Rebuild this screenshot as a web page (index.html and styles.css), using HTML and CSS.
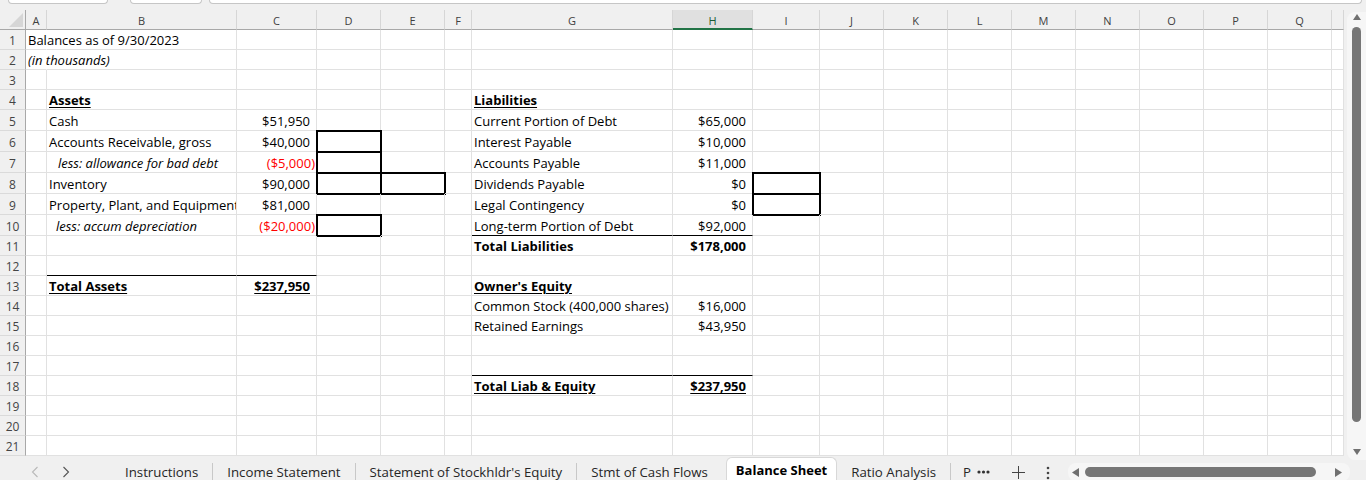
FILE: index.html
```html
<!DOCTYPE html>
<html lang="en">
<head>
    <meta charset="UTF-8">
    <meta name="viewport" content="width=device-width, initial-scale=1.0">
    <title>Balance Sheet</title>
    <link rel="stylesheet" href="styles.css">
</head>
<body>
    <!-- Name box / formula bar edges -->
    <div class="topbar">
        <div class="bar-box name-box"></div>
        <div class="bar-box fx-box"></div>
        <div class="bar-box formula-box"></div>
    </div>

    <div class="main">
        <div class="sheet" id="sheet"></div>

        <!-- Vertical scrollbar -->
        <div class="vscroll">
            <div class="vtrack">
                <svg class="varrow" width="8" height="6" viewBox="0 0 8 6"><path d="M4 0 L8 6 L0 6 Z" fill="#707070"/></svg>
                <div class="vthumb"></div>
                <svg class="varrow down" width="8" height="6" viewBox="0 0 8 6"><path d="M0 0 L8 0 L4 6 Z" fill="#707070"/></svg>
            </div>
        </div>
    </div>

    <!-- Sheet tabs -->
    <div class="tabbar">
        <div class="nav">
            <svg class="nav-prev" width="8" height="12" viewBox="0 0 8 12"><path d="M6.5 1 L1.5 6 L6.5 11" fill="none" stroke="#b9b9b9" stroke-width="1.1"/></svg>
            <svg class="nav-next" width="8" height="12" viewBox="0 0 8 12"><path d="M1.5 1 L6.5 6 L1.5 11" fill="none" stroke="#555" stroke-width="1.1"/></svg>
        </div>
        <div class="tab">Instructions</div>
        <div class="tab sep">Income Statement</div>
        <div class="tab sep">Statement of Stockhldr's Equity</div>
        <div class="tab sep">Stmt of Cash Flows</div>
        <div class="tab active">Balance Sheet</div>
        <div class="tab">Ratio Analysis</div>
        <div class="tab sep more">P
            <svg width="13" height="4" viewBox="0 0 13 4"><circle cx="2" cy="2" r="1.6" fill="#333"/><circle cx="6.5" cy="2" r="1.6" fill="#333"/><circle cx="11" cy="2" r="1.6" fill="#333"/></svg>
        </div>

        <div class="tools">
            <svg class="plus" width="13" height="13" viewBox="0 0 13 13"><path d="M6.5 0 V13 M0 6.5 H13" stroke="#444" stroke-width="1"/></svg>
            <svg class="kebab" width="4" height="14" viewBox="0 0 4 14"><circle cx="2" cy="2" r="1.3" fill="#444"/><circle cx="2" cy="7" r="1.3" fill="#444"/><circle cx="2" cy="12" r="1.3" fill="#444"/></svg>
            <div class="hscroll">
                <svg class="harrow" width="7" height="9" viewBox="0 0 7 9"><path d="M7 0 L7 9 L0 4.5 Z" fill="#707070"/></svg>
                <div class="hthumb"></div>
                <svg class="harrow right" width="7" height="9" viewBox="0 0 7 9"><path d="M0 0 L7 4.5 L0 9 Z" fill="#707070"/></svg>
            </div>
        </div>
    </div>

    <script>
        const colNames = ["A", "B", "C", "D", "E", "F", "G", "H", "I", "J", "K", "L", "M", "N", "O", "P", "Q", ""];

        // cell text and classes
        const cells = {
            A1: ["Balances as of 9/30/2023", "nr"],
            A2: ["(in thousands)", "i nr"],
            B4: ["Assets", "b u"],
            B5: ["Cash"],
            C5: ["$51,950", "num"],
            B6: ["Accounts Receivable, gross"],
            C6: ["$40,000", "num"],
            D6: ["", "boxed"],
            B7: ["less: allowance for bad debt", "i ind1"],
            C7: ["($5,000)", "num neg"],
            D7: ["", "boxed"],
            B8: ["Inventory"],
            C8: ["$90,000", "num"],
            D8: ["", "boxed"],
            E8: ["", "boxed"],
            B9: ["Property, Plant, and Equipment", "clip"],
            C9: ["$81,000", "num"],
            B10: ["less: accum depreciation", "i ind2"],
            C10: ["($20,000)", "num neg"],
            D10: ["", "boxed"],
            B12: ["", "line"],
            C12: ["", "line"],
            B13: ["Total Assets", "b u"],
            C13: ["$237,950", "num b u"],

            G4: ["Liabilities", "b u"],
            G5: ["Current Portion of Debt"],
            H5: ["$65,000", "num"],
            G6: ["Interest Payable"],
            H6: ["$10,000", "num"],
            G7: ["Accounts Payable"],
            H7: ["$11,000", "num"],
            G8: ["Dividends Payable"],
            H8: ["$0", "num"],
            I8: ["", "boxed"],
            G9: ["Legal Contingency"],
            H9: ["$0", "num"],
            I9: ["", "boxed"],
            G10: ["Long-term Portion of Debt", "line"],
            H10: ["$92,000", "num line"],
            G11: ["Total Liabilities", "b"],
            H11: ["$178,000", "num b"],
            G13: ["Owner's Equity", "b u"],
            G14: ["Common Stock (400,000 shares)"],
            H14: ["$16,000", "num"],
            G15: ["Retained Earnings"],
            H15: ["$43,950", "num"],
            G17: ["", "line"],
            H17: ["", "line"],
            G18: ["Total Liab &amp; Equity", "b u"],
            H18: ["$237,950", "num b u"]
        };

        let sheet = document.getElementById("sheet");
        let html = '<div class="corner"></div>';

        colNames.forEach(c => {
            html += `<div class="col-head${c === "H" ? " selected" : ""}">${c}</div>`;
        });

        for (let r = 1; r <= 21; r++) {
            html += `<div class="row-head">${r}</div>`;
            colNames.forEach(c => {
                let cell = cells[c + r] || [""];
                let text = cell[0] ? `<span>${cell[0]}</span>` : "";
                html += `<div class="cell ${cell[1] || ""}">${text}</div>`;
            });
        }

        sheet.innerHTML = html;
    </script>
</body>
</html>
```

FILE: styles.css
```css
/* General styling */
* {
    margin: 0;
    padding: 0;
    box-sizing: border-box;
}
body {
    width: 1366px;
    height: 480px;
    overflow: hidden;
    background: #f0f0f0;
    font-family: 'Open Sans', sans-serif;
    color: #000;
}

/* Formula bar remnants */
.topbar {
    height: 10px;
    display: flex;
    padding-left: 8px;
}
.bar-box {
    height: 4px;
    background: #fff;
    border: 1px solid #c6c6c6;
    border-top: none;
    border-radius: 0 0 5px 5px;
}
.name-box {
    width: 100px;
    margin-right: 22px;
}
.fx-box {
    width: 72px;
    margin-right: 7px;
}
.formula-box {
    flex: 1;
    margin-right: 4px;
}

/* Grid */
.main {
    display: flex;
    height: 446px;
}
.sheet {
    width: 1344px;
    display: grid;
    grid-template-columns: 26px 21px 190px 80px 64px 64px 27px 201px 80px 67px repeat(8, 64px) 12px;
    grid-template-rows: 20px repeat(4, 20px) repeat(6, 21px) repeat(11, 20px);
    background: #fff;
    font-size: 13px;
}
.corner {
    position: relative;
    background: #f0f0f0;
    border-right: 1px solid #a8a8a8;
    border-bottom: 1px solid #a8a8a8;
}
.corner::after {
    content: "";
    position: absolute;
    right: 2px;
    bottom: 2px;
    width: 14px;
    height: 14px;
    background: #d6d6d6;
    clip-path: polygon(100% 0, 100% 100%, 0 100%);
}
.col-head {
    background: #f0f0f0;
    border-right: 1px solid #d6d6d6;
    border-bottom: 1px solid #a8a8a8;
    display: flex;
    justify-content: center;
    align-items: center;
    padding-top: 2px;
    font-size: 11px;
    color: #404040;
}
.col-head.selected {
    background: #e0e0e0;
    border-bottom: 2px solid #217346;
    color: #1c5c36;
}
.row-head {
    background: #f0f0f0;
    border-right: 1px solid #a8a8a8;
    border-bottom: 1px solid #dadada;
    display: flex;
    justify-content: center;
    align-items: flex-end;
    line-height: 17px;
    font-size: 12px;
    color: #444;
}
.cell {
    border-right: 1px solid #e1e1e1;
    border-bottom: 1px solid #e1e1e1;
    display: flex;
    align-items: flex-end;
    padding: 0 2px;
    line-height: 17px;
    white-space: nowrap;
    min-width: 0;
}
.nr {
    border-right-color: #fff;
}
.b {
    font-weight: bold;
}
.i {
    font-style: italic;
}
.u span {
    text-decoration: underline;
    text-decoration-thickness: 1px;
    text-underline-offset: 2px;
}
.num {
    justify-content: flex-end;
    padding-right: 6px;
}
.neg {
    color: #ff0000;
    padding-right: 1px;
}
.ind1 {
    padding-left: 11px;
}
.ind2 {
    padding-left: 9px;
}
.clip {
    overflow: hidden;
}
.line {
    border-bottom-color: #000;
}
.boxed {
    outline: 2px solid #000;
    outline-offset: -1px;
}

/* Vertical scrollbar */
.vscroll {
    flex: 1;
    padding: 2px 0 0 3px;
}
.vtrack {
    height: 448px;
    background: #f6f6f6;
    border-radius: 8px 0 0 8px;
    display: flex;
    flex-direction: column;
    align-items: center;
    padding-top: 2px;
}
.vthumb {
    width: 9px;
    height: 395px;
    margin-top: 7px;
    background: #767676;
    border-radius: 5px;
}
.varrow.down {
    margin-top: 27px;
}

/* Sheet tabs */
.tabbar {
    height: 24px;
    display: flex;
    align-items: flex-start;
    font-size: 13.25px;
    color: #262626;
}
.nav {
    width: 111px;
    flex-shrink: 0;
    display: flex;
    padding: 10px 0 0 31px;
}
.nav-next {
    margin-left: 23px;
}
.tab {
    margin-top: 7px;
    height: 18px;
    line-height: 18px;
    padding: 0 14px;
    white-space: nowrap;
}
.tab.sep {
    border-left: 1px solid #c8c8c8;
}
.tab.active {
    margin: 1px 0 0 4px;
    height: 24px;
    padding: 3px 9px 0 9px;
    background: #fff;
    border: 1px solid #d8d8d8;
    border-bottom: none;
    border-radius: 6px 6px 0 0;
    font-size: 13px;
    font-weight: bold;
    color: #000;
}
.more {
    display: flex;
    align-items: center;
    padding: 0 4px 0 12px;
}
.more svg {
    margin-left: 6px;
}
.tools {
    margin-left: auto;
    flex-shrink: 0;
    width: 366px;
    display: flex;
    align-items: flex-start;
    padding-top: 10px;
}
.plus {
    margin-left: 12px;
}
.kebab {
    margin-left: 21px;
}
.hscroll {
    margin-left: 18px;
    margin-top: -3px;
    width: 282px;
    height: 18px;
    display: flex;
    align-items: center;
    background: #f6f6f6;
    border-radius: 8px;
}
.harrow {
    margin-left: 4px;
}
.hthumb {
    width: 231px;
    height: 10px;
    margin-left: 6px;
    background: #767676;
    border-radius: 5px;
}
.harrow.right {
    margin-left: 19px;
}
```
